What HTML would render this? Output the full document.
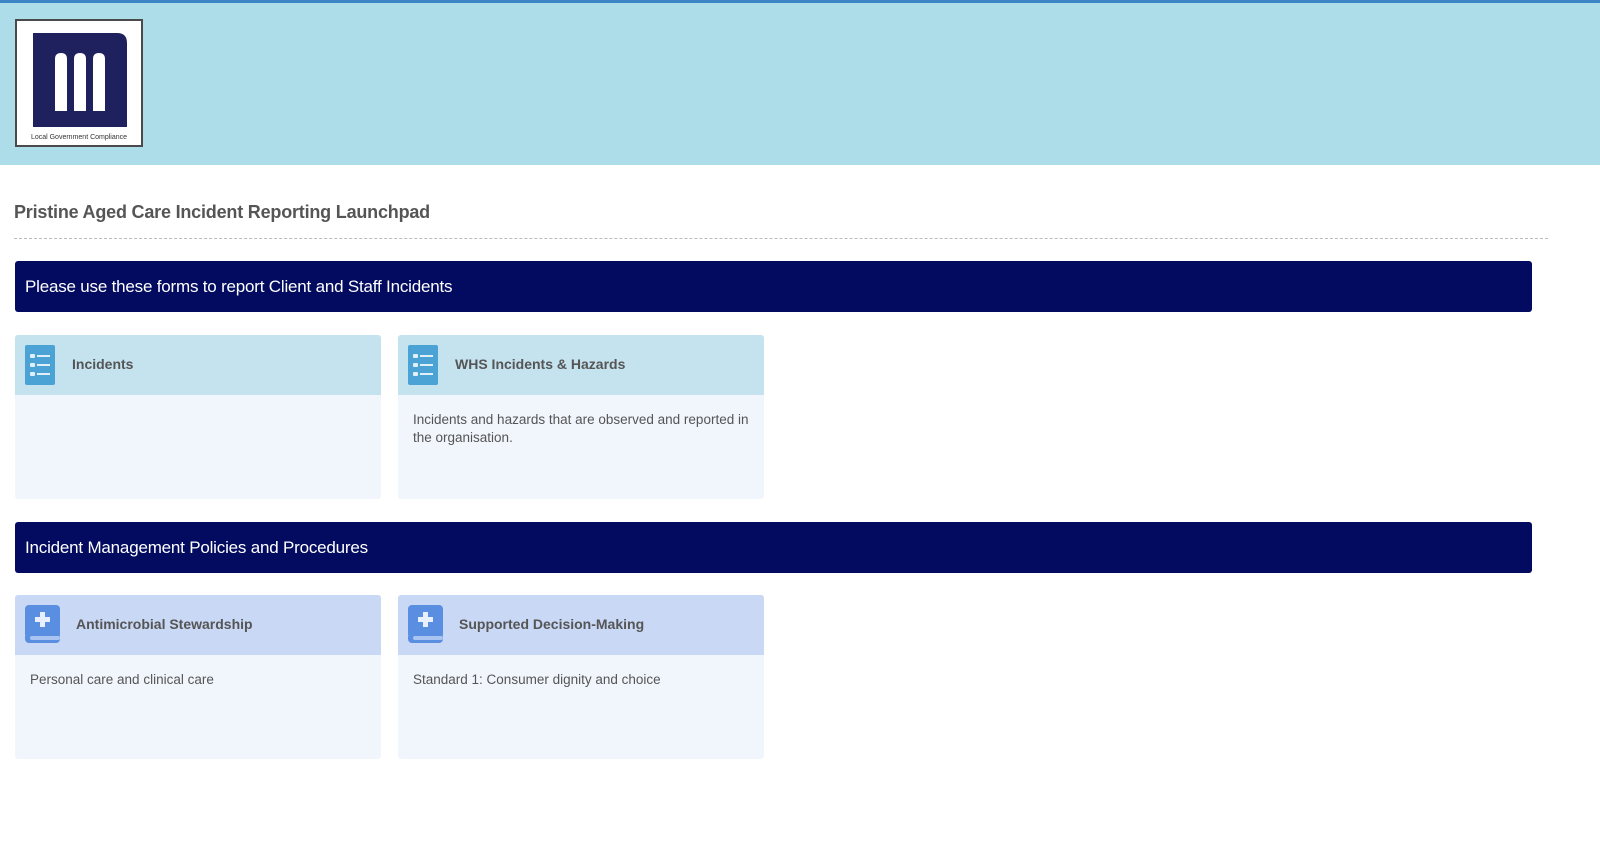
<!DOCTYPE html>
<html><head><style>
body{margin:0;width:1600px;height:848px;background:#fff;font-family:"Liberation Sans",sans-serif;position:relative;overflow:hidden}
.top{position:absolute;left:0;top:0;width:1600px;height:3px;background:#3d86c6}
.hdr{position:absolute;left:0;top:3px;width:1600px;height:162px;background:#acdde8}
.logo{position:absolute;left:15px;top:19px;width:124px;height:124px;background:#fff;border:2px solid #4a4a4a;box-sizing:content-box}
.title{position:absolute;left:14px;top:202px;font-size:18px;font-weight:bold;color:#555;letter-spacing:-0.2px}
.rule{position:absolute;left:14px;top:238px;width:1534px;border-top:1px dashed #bbb}
.band{position:absolute;left:15px;width:1517px;height:51px;background:#020b5f;border-radius:3px;color:#fff;font-size:17px;line-height:51px;padding-left:10px;box-sizing:border-box;letter-spacing:-0.2px}
.card{position:absolute;width:366px;height:164px;background:#f1f6fd;border-radius:3px;overflow:hidden}
.ch{height:60px;position:relative;font-size:14px;font-weight:bold;color:#555}
.ch span{position:absolute;top:21px}
.cb{padding:16px 15px;font-size:13.5px;color:#555;line-height:18px}
</style></head><body>
<div class="top"></div>
<div class="hdr"></div>
<div class="logo">
<svg width="124" height="124" viewBox="0 0 124 124">
<path d="M16 12 H100 Q110 12 110 22 V106 H16 Z" fill="#1f205e"/>
<path d="M38 90 V38 Q38 32 44 32 Q50 32 50 38 V90 Z" fill="#fff"/>
<path d="M57 90 V38 Q57 32 63 32 Q69 32 69 38 V90 Z" fill="#fff"/>
<path d="M76 90 V38 Q76 32 82 32 Q88 32 88 38 V90 Z" fill="#fff"/>
<text x="62" y="118" font-size="7" text-anchor="middle" fill="#333" font-family="Liberation Sans">Local Government Compliance</text>
</svg></div>
<div class="title">Pristine Aged Care Incident Reporting Launchpad</div>
<div class="rule"></div>
<div class="band" style="top:261px">Please use these forms to report Client and Staff Incidents</div>
<div class="card" style="left:15px;top:335px"><div class="ch" style="background:#c5e3ef">
<svg style="position:absolute;left:10px;top:10px" width="30" height="40" viewBox="0 0 30 40"><rect width="30" height="40" rx="2" fill="#4aa3d4"/><g fill="#dff0fa"><rect x="5" y="9" width="5" height="4" rx="1"/><rect x="12" y="10" width="13" height="2"/><rect x="5" y="18" width="5" height="4" rx="1"/><rect x="12" y="19" width="13" height="2"/><rect x="5" y="27" width="5" height="4" rx="1"/><rect x="12" y="28" width="13" height="2"/></g></svg>
<span style="left:57px">Incidents</span></div></div>
<div class="card" style="left:398px;top:335px"><div class="ch" style="background:#c5e3ef">
<svg style="position:absolute;left:10px;top:10px" width="30" height="40" viewBox="0 0 30 40"><rect width="30" height="40" rx="2" fill="#4aa3d4"/><g fill="#dff0fa"><rect x="5" y="9" width="5" height="4" rx="1"/><rect x="12" y="10" width="13" height="2"/><rect x="5" y="18" width="5" height="4" rx="1"/><rect x="12" y="19" width="13" height="2"/><rect x="5" y="27" width="5" height="4" rx="1"/><rect x="12" y="28" width="13" height="2"/></g></svg>
<span style="left:57px">WHS Incidents &amp; Hazards</span></div>
<div class="cb">Incidents and hazards that are observed and reported in the organisation.</div></div>
<div class="band" style="top:522px">Incident Management Policies and Procedures</div>
<div class="card" style="left:15px;top:595px"><div class="ch" style="background:#c9d8f5">
<svg style="position:absolute;left:10px;top:10px" width="36" height="40" viewBox="0 0 36 40"><rect x="0" y="0" width="35" height="33" rx="4" fill="#5a8ee0"/><rect x="0" y="28" width="35" height="10" rx="4" fill="#5a8ee0"/><rect x="5" y="31" width="30" height="4" rx="2" fill="#a9c4f0"/><path d="M15 7h5v5h5v5h-5v5h-5v-5h-5v-5h5z" fill="#e8efff"/></svg>
<span style="left:61px">Antimicrobial Stewardship</span></div>
<div class="cb">Personal care and clinical care</div></div>
<div class="card" style="left:398px;top:595px"><div class="ch" style="background:#c9d8f5">
<svg style="position:absolute;left:10px;top:10px" width="36" height="40" viewBox="0 0 36 40"><rect x="0" y="0" width="35" height="33" rx="4" fill="#5a8ee0"/><rect x="0" y="28" width="35" height="10" rx="4" fill="#5a8ee0"/><rect x="5" y="31" width="30" height="4" rx="2" fill="#a9c4f0"/><path d="M15 7h5v5h5v5h-5v5h-5v-5h-5v-5h5z" fill="#e8efff"/></svg>
<span style="left:61px">Supported Decision-Making</span></div>
<div class="cb">Standard 1: Consumer dignity and choice</div></div>
</body></html>
